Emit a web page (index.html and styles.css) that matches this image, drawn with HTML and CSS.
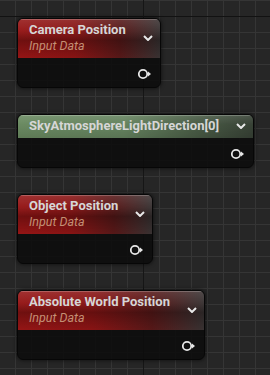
FILE: index.html
```html
<!DOCTYPE html>
<html>
<head>
    <title>Material Graph</title>
    <link rel="stylesheet" href="styles.css">
</head>
<body>
    <div class="graph">
        <div class="node node-red">
            <div class="node-header">
                <div class="node-titles">
                    <div class="node-title">Camera Position</div>
                    <div class="node-subtitle">Input Data</div>
                </div>
                <svg class="chevron" width="10" height="6" viewBox="0 0 10 6"><path d="M1 1 L5 5 L9 1" fill="none" stroke="#e8e8e8" stroke-width="2"/></svg>
            </div>
            <div class="node-body">
                <svg class="pin" width="15" height="12" viewBox="0 0 15 12"><circle cx="6" cy="6" r="4.2" fill="none" stroke="#e6e6e6" stroke-width="1.8"/><path d="M11 3.5 L14 6 L11 8.5 Z" fill="#e6e6e6"/></svg>
            </div>
        </div>

        <div class="node node-green">
            <div class="node-header">
                <div class="node-titles">
                    <div class="node-title">SkyAtmosphereLightDirection[0]</div>
                </div>
                <svg class="chevron" width="10" height="6" viewBox="0 0 10 6"><path d="M1 1 L5 5 L9 1" fill="none" stroke="#e8e8e8" stroke-width="2"/></svg>
            </div>
            <div class="node-body">
                <svg class="pin" width="15" height="12" viewBox="0 0 15 12"><circle cx="6" cy="6" r="4.2" fill="none" stroke="#e6e6e6" stroke-width="1.8"/><path d="M11 3.5 L14 6 L11 8.5 Z" fill="#e6e6e6"/></svg>
            </div>
        </div>

        <div class="node node-red">
            <div class="node-header">
                <div class="node-titles">
                    <div class="node-title">Object Position</div>
                    <div class="node-subtitle">Input Data</div>
                </div>
                <svg class="chevron" width="10" height="6" viewBox="0 0 10 6"><path d="M1 1 L5 5 L9 1" fill="none" stroke="#e8e8e8" stroke-width="2"/></svg>
            </div>
            <div class="node-body">
                <svg class="pin" width="15" height="12" viewBox="0 0 15 12"><circle cx="6" cy="6" r="4.2" fill="none" stroke="#e6e6e6" stroke-width="1.8"/><path d="M11 3.5 L14 6 L11 8.5 Z" fill="#e6e6e6"/></svg>
            </div>
        </div>

        <div class="node node-red">
            <div class="node-header">
                <div class="node-titles">
                    <div class="node-title">Absolute World Position</div>
                    <div class="node-subtitle">Input Data</div>
                </div>
                <svg class="chevron" width="10" height="6" viewBox="0 0 10 6"><path d="M1 1 L5 5 L9 1" fill="none" stroke="#e8e8e8" stroke-width="2"/></svg>
            </div>
            <div class="node-body">
                <svg class="pin" width="15" height="12" viewBox="0 0 15 12"><circle cx="6" cy="6" r="4.2" fill="none" stroke="#e6e6e6" stroke-width="1.8"/><path d="M11 3.5 L14 6 L11 8.5 Z" fill="#e6e6e6"/></svg>
            </div>
        </div>
    </div>
</body>
</html>
```

FILE: styles.css
```css
html, body {
    margin: 0;
    height: 100%;
}

body {
    font-family: Roboto, "Liberation Sans", sans-serif;
    background-color: #262626;
    background-image:
        linear-gradient(to right, transparent 143px, #161616 143px, #161616 144px, transparent 144px),
        linear-gradient(to bottom, transparent 16px, #121212 16px, #121212 17px, transparent 17px),
        repeating-linear-gradient(to right, transparent 0, transparent 15px, #353535 15px, #353535 16px),
        repeating-linear-gradient(to bottom, #353535 0, #353535 1px, transparent 1px, transparent 16px);
    overflow: hidden;
}

.graph {
    display: flex;
    flex-direction: column;
    align-items: flex-start;
    gap: 26px;
    padding: 18px 0 0 17px;
}

.node {
    border: 1px solid #070707;
    border-radius: 6px;
    background: rgba(12, 13, 12, 0.88);
    box-shadow: 0 0 4px rgba(0, 0, 0, 0.7);
    overflow: hidden;
}

.node-header {
    display: flex;
    align-items: center;
    gap: 17px;
    padding: 3px 7px 4px 11px;
    box-shadow: inset 0 1px 0 rgba(255, 255, 255, 0.22);
}

.node-red .node-header {
    background:
        linear-gradient(to bottom, rgba(255, 255, 255, 0.12) 0%, rgba(255, 255, 255, 0.03) 30%, rgba(0, 0, 0, 0.25) 55%, rgba(0, 0, 0, 0) 100%),
        linear-gradient(to right, #951515 0%, #881414 40%, #561818 72%, #383232 100%);
}

.node-green .node-header {
    background:
        linear-gradient(to bottom, rgba(255, 255, 255, 0.1) 0%, rgba(255, 255, 255, 0) 40%, rgba(0, 0, 0, 0.12) 100%),
        linear-gradient(to right, #6b8b62 0%, #668460 45%, #4b5e47 75%, #384236 100%);
}

.node-title {
    font-size: 13px;
    font-weight: bold;
    line-height: 16px;
    color: #d6d6d6;
    white-space: nowrap;
}

.node-subtitle {
    font-size: 12.5px;
    font-style: italic;
    line-height: 16px;
    color: #c48f74;
    white-space: nowrap;
}

.chevron {
    display: block;
    flex-shrink: 0;
}

.node-body {
    display: flex;
    align-items: center;
    justify-content: flex-end;
    height: 29px;
    padding-right: 8px;
}

.pin {
    display: block;
    margin-top: 2px;
}
```
